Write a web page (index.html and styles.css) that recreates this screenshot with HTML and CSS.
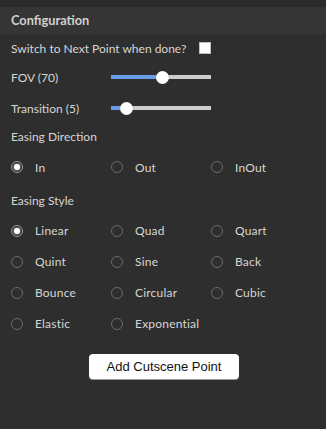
FILE: index.html
```html
<!DOCTYPE html>
<html lang="en">
<head>
    <meta charset="UTF-8">
    <meta name="viewport" content="width=device-width, initial-scale=1.0">
    <title>Configuration</title>
    <link rel="stylesheet" href="styles.css">
</head>
<body>
    <div class="topbar"></div>
    <header class="section-head">Configuration</header>

    <div class="row row-check">
        <span>Switch to Next Point when done?</span>
        <span class="checkbox"></span>
    </div>

    <div class="row row-slider">
        <span class="label">FOV (70)</span>
        <div class="slider">
            <div class="fill" style="width: 51px"></div>
            <div class="thumb" style="left: 51px"></div>
        </div>
    </div>

    <div class="row row-slider tall">
        <span class="label">Transition (5)</span>
        <div class="slider">
            <div class="fill" style="width: 15px"></div>
            <div class="thumb" style="left: 15px"></div>
        </div>
    </div>

    <div class="row heading short">Easing Direction</div>
    <div class="options direction">
        <label class="option"><span class="radio checked"></span>In</label>
        <label class="option"><span class="radio"></span>Out</label>
        <label class="option"><span class="radio"></span>InOut</label>
    </div>

    <div class="row heading">Easing Style</div>
    <div class="options">
        <label class="option"><span class="radio checked"></span>Linear</label>
        <label class="option"><span class="radio"></span>Quad</label>
        <label class="option"><span class="radio"></span>Quart</label>
        <label class="option"><span class="radio"></span>Quint</label>
        <label class="option"><span class="radio"></span>Sine</label>
        <label class="option"><span class="radio"></span>Back</label>
        <label class="option"><span class="radio"></span>Bounce</label>
        <label class="option"><span class="radio"></span>Circular</label>
        <label class="option"><span class="radio"></span>Cubic</label>
        <label class="option"><span class="radio"></span>Elastic</label>
        <label class="option"><span class="radio"></span>Exponential</label>
    </div>

    <div class="actions">
        <button class="add-btn">Add Cutscene Point</button>
    </div>
</body>
</html>
```

FILE: styles.css
```css
:root {
    --bg: #2e2e2e;
    --head: #353535;
    --text: #d6d6d6;
    --blue: #6a9be6;
    --track: #cdcdcd;
}

body {
    margin: 0;
    background-color: var(--bg);
    color: var(--text);
    font-family: 'Lato', sans-serif;
    font-size: 12px;
    height: 429px;
    overflow: hidden;
}

.topbar {
    height: 7px;
    background-color: #2a2a2a;
}

.section-head {
    height: 27px;
    line-height: 26px;
    padding-left: 11px;
    background-color: var(--head);
    font-weight: bold;
    font-size: 12.8px;
    color: #d0d0d0;
}

.row {
    display: flex;
    align-items: center;
    padding-left: 11px;
    height: 28px;
}

.row-check span:first-child {
    margin-right: 13px;
}

.checkbox {
    width: 10px;
    height: 10px;
    background-color: #ffffff;
    border: 1px solid #bdbdbd;
}

.row-slider {
    height: 30px;
}

.row-slider.tall {
    height: 32px;
}

.row-slider .label {
    width: 100px;
}

.slider {
    position: relative;
    width: 100px;
    height: 4px;
    background-color: var(--track);
}

.slider .fill {
    height: 100%;
    background-color: var(--blue);
}

.slider .thumb {
    position: absolute;
    top: 50%;
    width: 13px;
    height: 13px;
    margin-left: -6px;
    margin-top: -6.5px;
    border-radius: 50%;
    background-color: #ffffff;
    box-shadow: 0 0 1px rgba(0, 0, 0, 0.4);
}

.heading {
    height: 29px;
}

.heading.short {
    height: 24px;
}

.options {
    display: grid;
    grid-template-columns: repeat(3, 100px);
    grid-auto-rows: 31px;
    padding-left: 11px;
}

.options.direction {
    grid-auto-rows: 38px;
}

.option {
    display: flex;
    align-items: center;
    gap: 12px;
    letter-spacing: 0.2px;
}

.radio {
    box-sizing: border-box;
    width: 12px;
    height: 12px;
    border: 1px solid #6b6b6b;
    border-radius: 50%;
    position: relative;
}

.radio.checked {
    border-color: #9a9a9a;
}

.radio.checked::after {
    content: "";
    position: absolute;
    top: 2px;
    left: 2px;
    width: 6px;
    height: 6px;
    border-radius: 50%;
    background-color: #ffffff;
    box-shadow: 0 0 2px #ffffff;
}

.actions {
    display: flex;
    justify-content: center;
    margin-top: 15px;
}

.add-btn {
    width: 150px;
    height: 25px;
    margin-left: 2px;
    background-color: #ffffff;
    color: #111111;
    border: none;
    border-radius: 4px;
    box-shadow: 0 1px 0 #9a9a9a;
    font-family: 'Liberation Sans', Arial, sans-serif;
    font-size: 13px;
    padding: 0;
}
```
